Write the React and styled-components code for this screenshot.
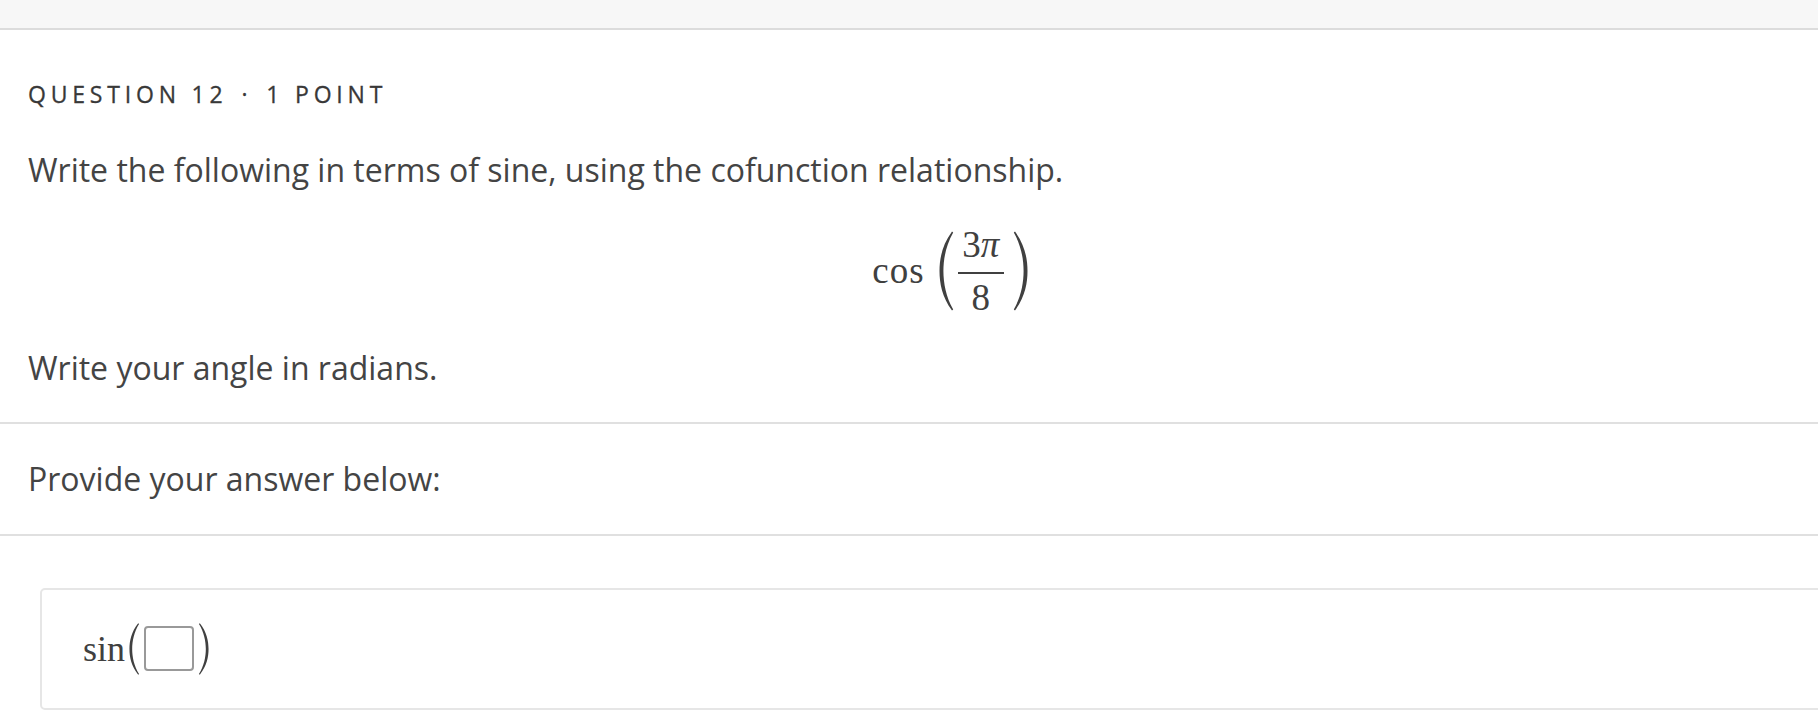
import React from "react"
import styled, { createGlobalStyle } from "styled-components"

const GlobalStyle = createGlobalStyle`
  html, body {
    margin: 0;
    padding: 0;
    background: #ffffff;
    overflow: hidden;
  }
  body {
    font-family: "Open Sans", "Liberation Sans", sans-serif;
    color: #444444;
  }
`

function Paren({ w, h, flip }) {
  return (
    <ParenSvg viewBox="0 0 20 80" width={w} height={h} preserveAspectRatio="none" $flip={flip}>
      <path
        d="M16 0.5 C6 14 3.5 28 3.5 40 C3.5 52 6 66 16 79.5 L17.2 78.5 C10 66 7.4 52 7.4 40 C7.4 28 10 14 17.2 1.5 Z"
        fill="#404040"
      />
    </ParenSvg>
  )
}

export default function App() {
  return (
    <>
      <GlobalStyle />
      <Page>
        <TopBar />
        <QuestionSection>
          <QuestionMeta>
            <span>Question 12</span>
            <Dot>·</Dot>
            <span>1 point</span>
          </QuestionMeta>
          <Prompt>Write the following in terms of sine, using the cofunction relationship.</Prompt>
          <MathDisplay>
            <MathText>cos</MathText>
            <Paren w={20} h={80} />
            <Fraction>
              <Numerator>
                3<i>π</i>
              </Numerator>
              <FracBar />
              <Denominator>8</Denominator>
            </Fraction>
            <Paren w={20} h={80} flip />
          </MathDisplay>
          <Prompt>Write your angle in radians.</Prompt>
        </QuestionSection>
        <AnswerLabel>
          <Prompt>Provide your answer below:</Prompt>
        </AnswerLabel>
        <AnswerCard>
          <SinRow>
            <SinText>sin</SinText>
            <Paren w={14} h={52} />
            <AnswerBox aria-label="answer" />
            <Paren w={14} h={52} flip />
          </SinRow>
        </AnswerCard>
      </Page>
    </>
  )
}

const Page = styled.div`
  width: 1903px;
  display: flex;
  flex-direction: column;
`

const TopBar = styled.div`
  height: 28px;
  background: #f7f7f7;
  border-bottom: 2px solid #dcdcdc;
`

const QuestionSection = styled.section`
  display: flex;
  flex-direction: column;
  padding: 47px 28px 30px;
  border-bottom: 2px solid #e0e0e0;
`

const QuestionMeta = styled.div`
  display: flex;
  align-items: center;
  font-size: 23px;
  line-height: 1.5;
  letter-spacing: 4.8px;
  text-transform: uppercase;
  color: #383838;
  -webkit-text-stroke: 0.3px #383838;
  margin-bottom: 34px;
`

const Dot = styled.span`
  margin: 0 14px 0 14px;
`

const Prompt = styled.p`
  margin: 0;
  font-size: 32px;
  line-height: 1.5;
  color: #444444;
`

const MathDisplay = styled.div`
  display: flex;
  align-items: center;
  justify-content: center;
  margin: 32px 0 28px;
  font-family: "Liberation Serif", "Times New Roman", serif;
  color: #404040;
`

const MathText = styled.span`
  font-size: 37px;
  line-height: 1;
  letter-spacing: 1px;
  margin-right: 11px;
`

const ParenSvg = styled.svg`
  display: block;
  flex: none;
  transform: ${(p) => (p.$flip ? "scaleX(-1)" : "none")};
`

const Fraction = styled.div`
  display: flex;
  flex-direction: column;
  align-items: stretch;
  width: 46px;
  margin: 0 7px 0 2px;
  font-size: 37px;
  line-height: 1;
  text-align: center;
`

const Numerator = styled.span`
  display: block;
  margin-bottom: 9px;
  i {
    font-style: italic;
  }
`

const FracBar = styled.div`
  height: 2px;
  background: #404040;
`

const Denominator = styled.span`
  display: block;
  margin-top: 5px;
`

const AnswerLabel = styled.section`
  padding: 31px 28px 31px;
  border-bottom: 2px solid #e0e0e0;
`

const AnswerCard = styled.div`
  box-sizing: border-box;
  height: 122px;
  margin: 52px 40px 0 40px;
  padding-left: 41px;
  border: 2px solid #e6e6e6;
  border-radius: 5px;
  display: flex;
  align-items: center;
`

const SinRow = styled.div`
  display: flex;
  align-items: center;
  font-family: "Liberation Serif", "Times New Roman", serif;
  color: #404040;
`

const SinText = styled.span`
  font-size: 36px;
  line-height: 1;
  margin-right: 2px;
`

const AnswerBox = styled.div`
  box-sizing: border-box;
  width: 50px;
  height: 45px;
  margin: 0 3px;
  border: 2px solid #999999;
  border-radius: 4px;
  background: #ffffff;
`
